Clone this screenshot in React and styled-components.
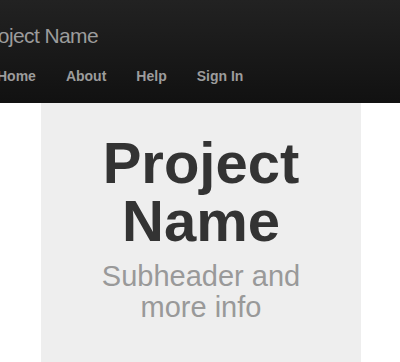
import React from "react";
import styled, { createGlobalStyle } from "styled-components";

const Global = createGlobalStyle`
  html, body { margin: 0; padding: 0; background: #fff; }
  body { font-family: "Liberation Sans", Arial, Helvetica, sans-serif; overflow: hidden; }
`;

const Header = styled.header`
  background: linear-gradient(to bottom, #222222, #111111);
  height: 103px;
  box-sizing: border-box;
  padding-top: 24px;
  overflow: hidden;
`;

const HeaderInner = styled.div`
  margin-left: -18px;
  display: flex;
  flex-direction: column;
  gap: 18px;
`;

const Brand = styled.a`
  display: block;
  margin-left: -4px;
  font-size: 21px;
  line-height: 24px;
  letter-spacing: -0.6px;
  color: #9c9c9c;
  text-decoration: none;
  white-space: nowrap;
`;

const Nav = styled.nav`
  display: flex;
`;

const NavLink = styled.a`
  padding: 0 15px;
  font-size: 14px;
  line-height: 20px;
  font-weight: bold;
  color: #9c9c9c;
  text-decoration: none;
  white-space: nowrap;
`;

const Hero = styled.section`
  width: 320px;
  margin: 0 39px 0 41px;
  min-height: 259px;
  box-sizing: border-box;
  padding: 31px 30px 0;
  background: #eeeeee;
  text-align: center;
`;

const Title = styled.h1`
  margin: 0;
  font-size: 58px;
  line-height: 58px;
  font-weight: bold;
  color: #333333;
`;

const Sub = styled.p`
  margin: 11px 0 0;
  font-size: 29px;
  line-height: 31px;
  color: #999999;
`;

export default function App() {
  return (
    <>
      <Global />
      <Header>
        <HeaderInner>
          <Brand href="#">Project Name</Brand>
          <Nav>
            <NavLink href="#">Home</NavLink>
            <NavLink href="#">About</NavLink>
            <NavLink href="#">Help</NavLink>
            <NavLink href="#">Sign In</NavLink>
          </Nav>
        </HeaderInner>
      </Header>
      <Hero>
        <Title>Project Name</Title>
        <Sub>Subheader and more info</Sub>
      </Hero>
    </>
  );
}
